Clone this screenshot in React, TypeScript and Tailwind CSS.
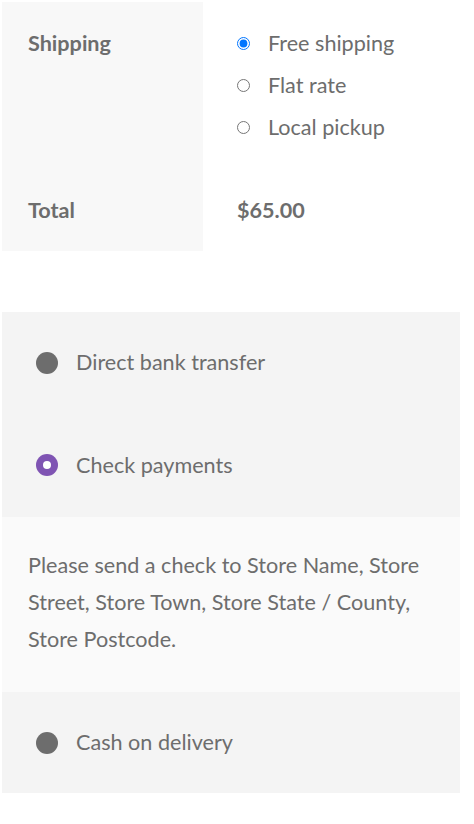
import React from "react";

const shippingOptions = [
  { id: "free", label: "Free shipping", checked: true },
  { id: "flat", label: "Flat rate", checked: false },
  { id: "local", label: "Local pickup", checked: false },
];

function Dot({ active }: { active?: boolean }) {
  if (active) {
    return (
      <span className="flex h-[22px] w-[22px] shrink-0 items-center justify-center rounded-full bg-[#7f54b3]">
        <span className="h-[8px] w-[8px] rounded-full bg-white" />
      </span>
    );
  }
  return <span className="h-[22px] w-[22px] shrink-0 rounded-full bg-[#6d6d6d]" />;
}

function PaymentRow({ label, active, h }: { label: string; active?: boolean; h: string }) {
  return (
    <div className={`flex items-center gap-[18px] bg-[#f4f4f4] pl-[34px] ${h}`}>
      <Dot active={active} />
      <span>{label}</span>
    </div>
  );
}

export default function App() {
  return (
    <div
      className="min-h-screen bg-white pl-[2px] pt-[2px] text-[21.6px] text-[#6d6d6d]"
      style={{ fontFamily: "Lato, 'Noto Sans', sans-serif" }}
    >
      <div className="grid w-[458px] grid-cols-[201px_1fr]">
        <div className="bg-[#f8f8f8] pl-[26px] pt-[20px] font-bold">
          <div className="flex h-[42px] items-center">Shipping</div>
        </div>
        <div className="pb-[21px] pl-[34px] pt-[20px]">
          {shippingOptions.map((o) => (
            <label key={o.id} className="flex h-[42px] items-center gap-[18px] whitespace-nowrap">
              <input
                type="radio"
                name="shipping"
                defaultChecked={o.checked}
                className="m-0 h-[13px] w-[13px] shrink-0"
              />
              <span>{o.label}</span>
            </label>
          ))}
        </div>
        <div className="flex h-[82px] items-center bg-[#f8f8f8] pl-[26px] font-bold">Total</div>
        <div className="flex h-[82px] items-center pl-[34px] font-bold">$65.00</div>
      </div>

      <div className="mt-[61px] w-[458px]">
        <PaymentRow label="Direct bank transfer" h="h-[101px]" />
        <PaymentRow label="Check payments" active h="h-[104px]" />
        <div className="h-[175px] bg-[#fafafa] px-[26px] pt-[30px] leading-[37px]">
          Please send a check to Store Name, Store Street, Store Town, Store State / County, Store
          Postcode.
        </div>
        <PaymentRow label="Cash on delivery" h="h-[101px]" />
      </div>
    </div>
  );
}
